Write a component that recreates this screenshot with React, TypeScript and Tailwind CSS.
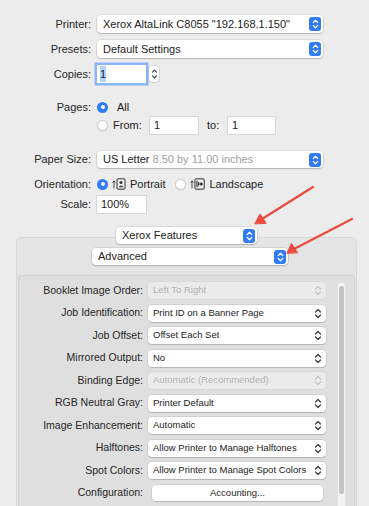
import React from 'react';
import clsx from 'clsx';

const font = { fontFamily: '"Liberation Sans", Arial, sans-serif' };

const BlueStepper = () => (
  <div className="flex h-[14px] w-[12px] shrink-0 items-center justify-center rounded-[3px] bg-[#2f7cf6]">
    <svg width="7" height="10" viewBox="0 0 7 10" fill="none" stroke="white" strokeWidth="1.3" strokeLinecap="round" strokeLinejoin="round">
      <path d="M1.2 3.6 L3.5 1.3 L5.8 3.6" />
      <path d="M1.2 6.4 L3.5 8.7 L5.8 6.4" />
    </svg>
  </div>
);

const Chevrons = ({ light }: { light?: boolean }) => (
  <svg width="8" height="11" viewBox="0 0 8 11" fill="none" stroke={light ? '#c4c4c4' : '#3a3a3a'} strokeWidth="1.2" strokeLinecap="round" strokeLinejoin="round" className="shrink-0">
    <path d="M1.5 4 L4 1.5 L6.5 4" />
    <path d="M1.5 7 L4 9.5 L6.5 7" />
  </svg>
);

interface PopupProps {
  children: React.ReactNode;
  className?: string;
}

// big popup with blue stepper button
const Popup: React.FC<PopupProps> = ({ children, className }) => (
  <div
    className={clsx(
      'flex items-center justify-between rounded-[4px] bg-white pl-[6px] pr-[2px] text-[11px] text-[#222]',
      'shadow-[0_0_0_0.5px_rgba(0,0,0,0.14),0_1px_1.5px_rgba(0,0,0,0.18)]',
      className
    )}
  >
    <span className="truncate">{children}</span>
    <BlueStepper />
  </div>
);

// compact popup in the feature list
const SmallPopup = ({ value, disabled }: { value: string; disabled?: boolean }) => (
  <div
    className={clsx(
      'flex h-[17px] w-[178px] items-center justify-between rounded-[4px] pl-[5px] pr-[4px] text-[9.5px]',
      disabled
        ? 'bg-[#ebebeb] text-[#b3b3b3] shadow-[0_0_0_0.5px_rgba(0,0,0,0.06)]'
        : 'bg-white text-[#222] shadow-[0_0_0_0.5px_rgba(0,0,0,0.12),0_1px_1px_rgba(0,0,0,0.15)]'
    )}
  >
    <span className="truncate">{value}</span>
    <Chevrons light={disabled} />
  </div>
);

const Radio = ({ on }: { on?: boolean }) =>
  on ? (
    <div className="flex h-[11px] w-[11px] shrink-0 items-center justify-center rounded-full bg-[#2f7cf6]">
      <div className="h-[4px] w-[4px] rounded-full bg-white" />
    </div>
  ) : (
    <div className="h-[11px] w-[11px] shrink-0 rounded-full border border-[#c8c8c8] bg-white shadow-[0_0.5px_1px_rgba(0,0,0,0.12)]" />
  );

const Field = ({ value, className }: { value: string; className?: string }) => (
  <div className={clsx('flex items-center bg-white pl-[4px] text-[11px] text-[#222] shadow-[0_0_0_0.5px_rgba(0,0,0,0.18)]', className)}>
    {value}
  </div>
);

const Label = ({ children }: { children: React.ReactNode }) => (
  <div className="w-[97px] shrink-0 pr-[6px] text-right text-[11px] text-[#262626]">{children}</div>
);

const PortraitIcon = () => (
  <svg width="14" height="12" viewBox="0 0 14 12" fill="none" className="shrink-0">
    <path d="M2 10 V3 M0.8 4.3 L2 3 L3.2 4.3" stroke="#333" strokeWidth="0.9" strokeLinecap="round" />
    <rect x="5" y="0.8" width="8" height="10.4" rx="1" stroke="#333" strokeWidth="1" />
    <circle cx="9" cy="4.4" r="1.5" fill="#333" />
    <path d="M6.5 9.3 Q9 5.8 11.5 9.3 Z" fill="#333" />
  </svg>
);

const LandscapeIcon = () => (
  <svg width="15" height="12" viewBox="0 0 15 12" fill="none" className="shrink-0">
    <path d="M2 10 V3 M0.8 4.3 L2 3 L3.2 4.3" stroke="#333" strokeWidth="0.9" strokeLinecap="round" />
    <rect x="5" y="0.8" width="9.2" height="10.4" rx="1" stroke="#333" strokeWidth="1" />
    <path d="M7 2.8 V9.2" stroke="#333" strokeWidth="1.1" />
    <circle cx="11.2" cy="6" r="1.5" fill="#333" />
    <path d="M8 3.6 Q11.2 6 8 8.4 Z" fill="#333" />
  </svg>
);

const features: { label: string; value: string; disabled?: boolean }[] = [
  { label: 'Booklet Image Order:', value: 'Left To Right', disabled: true },
  { label: 'Job Identification:', value: 'Print ID on a Banner Page' },
  { label: 'Job Offset:', value: 'Offset Each Set' },
  { label: 'Mirrored Output:', value: 'No' },
  { label: 'Binding Edge:', value: 'Automatic (Recommended)', disabled: true },
  { label: 'RGB Neutral Gray:', value: 'Printer Default' },
  { label: 'Image Enhancement:', value: 'Automatic' },
  { label: 'Halftones:', value: 'Allow Printer to Manage Halftones' },
  { label: 'Spot Colors:', value: 'Allow Printer to Manage Spot Colors' },
];

export default function App() {
  return (
    <div className="relative h-[506px] w-[369px] overflow-hidden bg-[#ececec]" style={font}>
      <div className="flex flex-col pt-[15px]">
        <div className="flex h-[18px] items-center">
          <Label>Printer:</Label>
          <Popup className="h-[18px] w-[226px]">Xerox AltaLink C8055 "192.168.1.150"</Popup>
        </div>
        <div className="mt-[7px] flex h-[18px] items-center">
          <Label>Presets:</Label>
          <Popup className="h-[18px] w-[226px]">Default Settings</Popup>
        </div>
        <div className="mt-[7px] flex h-[18px] items-center">
          <Label>Copies:</Label>
          <div className="flex h-[18px] w-[49px] items-center bg-white pl-[3px] text-[11px] text-[#222] shadow-[0_0_0_2.5px_#8ab6f3]">
            <span className="bg-[#b3d3fb]">1</span>
          </div>
          <div className="ml-[3px] flex h-[16px] w-[10px] flex-col items-center justify-center rounded-[3px] bg-white shadow-[0_0_0_0.5px_rgba(0,0,0,0.2)]">
            <svg width="7" height="12" viewBox="0 0 7 12" fill="none" stroke="#333" strokeWidth="1.1" strokeLinecap="round" strokeLinejoin="round">
              <path d="M1.5 4.2 L3.5 2.2 L5.5 4.2" />
              <path d="M1.5 7.8 L3.5 9.8 L5.5 7.8" />
            </svg>
          </div>
        </div>
        <div className="mt-[16px] flex h-[16px] items-center">
          <Label>Pages:</Label>
          <Radio on />
          <span className="ml-[9px] text-[11px] text-[#222]">All</span>
        </div>
        <div className="mt-[2px] flex h-[17px] items-center">
          <div className="w-[97px] shrink-0" />
          <Radio />
          <span className="ml-[5px] w-[37px] text-[11px] text-[#222]">From:</span>
          <Field value="1" className="h-[17px] w-[48px]" />
          <span className="ml-[9px] w-[21px] text-[11px] text-[#222]">to:</span>
          <Field value="1" className="h-[17px] w-[47px]" />
        </div>
        <div className="mt-[17px] flex h-[17px] items-center">
          <Label>Paper Size:</Label>
          <Popup className="h-[17px] w-[226px]">
            US Letter <span className="text-[#a0a0a0]">8.50 by 11.00 inches</span>
          </Popup>
        </div>
        <div className="mt-[8px] flex h-[16px] items-center text-[11px] text-[#222]">
          <Label>Orientation:</Label>
          <Radio on />
          <span className="ml-[4px]"><PortraitIcon /></span>
          <span className="ml-[4px]">Portrait</span>
          <span className="ml-[10px]"><Radio /></span>
          <span className="ml-[4px]"><LandscapeIcon /></span>
          <span className="ml-[4px]">Landscape</span>
        </div>
        <div className="mt-[4px] flex h-[17px] items-center">
          <Label>Scale:</Label>
          <Field value="100%" className="h-[17px] w-[49px]" />
        </div>

        <div className="relative z-10 -mb-[7px] mt-[14px] pl-[116px]">
          <Popup className="h-[17px] w-[141px]">Xerox Features</Popup>
        </div>

        <div className="ml-[16px] w-[341px] rounded-t-[5px] border border-b-0 border-[#d9d9d9] bg-[#e4e4e4] pb-[40px]">
          <div className="pl-[75px] pt-[10px]">
            <Popup className="h-[17px] w-[196px]">Advanced</Popup>
          </div>
          <div className="ml-[1px] mt-[10px] flex w-[337px] rounded-t-[4px] border border-b-0 border-[#d2d2d2] bg-[#dfdfdf] pt-[6px]">
            <div className="flex flex-col gap-[5.5px]">
              {features.map((f) => (
                <div key={f.label} className="flex h-[17px] items-center">
                  <div className="w-[124px] shrink-0 text-right text-[10.5px] text-[#262626]">{f.label}</div>
                  <div className="ml-[5px]">
                    <SmallPopup value={f.value} disabled={f.disabled} />
                  </div>
                </div>
              ))}
              <div className="flex h-[17px] items-center">
                <div className="w-[124px] shrink-0 text-right text-[10.5px] text-[#262626]">Configuration:</div>
                <div className="ml-[9px] flex h-[16px] w-[171px] items-center justify-center rounded-[4px] bg-white text-[9.5px] text-[#222] shadow-[0_0_0_0.5px_rgba(0,0,0,0.12),0_1px_1px_rgba(0,0,0,0.15)]">
                  Accounting...
                </div>
              </div>
            </div>
            <div className="ml-[11px] h-[230px] w-[9px] rounded-t-[4px] border border-[#e2e2e2] bg-[#f3f3f3] px-[1px] pt-[3px]">
              <div className="h-[208px] w-full rounded-full bg-[#c3c3c3]" />
            </div>
          </div>
        </div>
      </div>

      {/* red annotation arrows */}
      <svg className="pointer-events-none absolute left-0 top-0" width="369" height="506" viewBox="0 0 369 506">
        <g stroke="#ea4a40" strokeWidth="2.2" strokeLinecap="round" fill="#ea4a40">
          <line x1="313" y1="187" x2="262" y2="219" />
          <path d="M255 223.5 L260 214 L266 223 Z" strokeWidth="1" strokeLinejoin="round" />
          <line x1="352" y1="219" x2="294" y2="249" />
          <path d="M287 253 L291.5 243.5 L297.5 252.5 Z" strokeWidth="1" strokeLinejoin="round" />
        </g>
      </svg>
    </div>
  );
}
